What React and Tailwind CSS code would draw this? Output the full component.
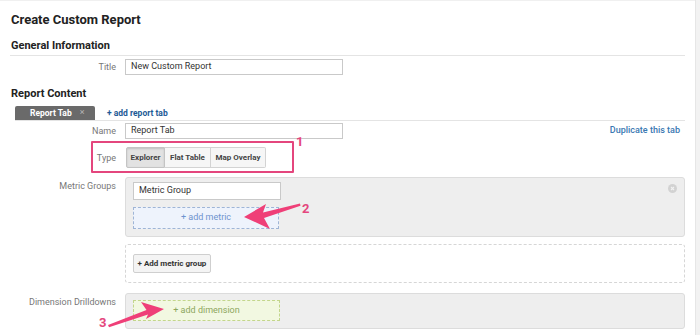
import React from "react";

function Label({ children, className = "" }) {
  return (
    <div className={"w-[107px] shrink-0 text-right text-[9px] leading-[12px] text-[#777] pr-[1px] " + className}>
      {children}
    </div>
  );
}

function Input({ value, className = "" }) {
  return (
    <div className={"h-[16px] bg-white border border-[#c9c9c9] pl-[5px] flex items-center text-[9px] text-[#333] " + className}>
      {value}
    </div>
  );
}

export default function App() {
  return (
    <div className="w-[700px] h-[335px] flex bg-white overflow-hidden relative font-['Roboto','Liberation_Sans',sans-serif]">
      <div className="w-[695px] shrink-0 pl-[10px] pr-[10px] border-t border-[#f0f0f0]">
        <div className="mt-[11px] text-[13px] leading-[16px] font-bold text-[#222] pl-[1px]">Create Custom Report</div>

        <div className="mt-[11px] text-[11px] leading-[14px] font-bold text-[#222] pb-[2px] border-b border-[#e4e4e4] pl-[1px]">
          General Information
        </div>

        <div className="mt-[3px] flex items-center">
          <Label>Title</Label>
          <Input value="New Custom Report" className="ml-[8px] w-[218px]" />
        </div>

        <div className="mt-[12px] text-[11px] leading-[14px] font-bold text-[#222] pl-[1px]">Report Content</div>

        <div className="mt-[5px] ml-[5px] flex items-end border-b border-[#e4e4e4]">
          <div className="w-[80px] h-[14px] bg-[#6a6a6a] rounded-t-[2px] flex items-center pl-[15px] text-[8.5px] font-bold text-white">
            <span>Report Tab</span>
            <span className="ml-[8px] text-[#b5b5b5] font-normal text-[9px]">×</span>
          </div>
          <div className="ml-[12px] self-center text-[8.5px] font-bold text-[#1d5a96]">+ add report tab</div>
        </div>

        <div className="mt-[2px] flex items-center">
          <Label>Name</Label>
          <Input value="Report Tab" className="ml-[8px] w-[218px]" />
          <div className="ml-auto mr-[5px] text-[9px] text-[#3a78b2] font-medium">Duplicate this tab</div>
        </div>

        <div className="mt-[8px] flex items-center">
          <Label>Type</Label>
          <div className="ml-[9px] flex h-[21px] text-[8px] font-bold text-[#444]">
            <div className="w-[39px] flex items-center justify-center bg-[#e2e2e2] border border-[#c4c4c4] rounded-l-[2px] shadow-[inset_0_1px_2px_rgba(0,0,0,0.15)]">Explorer</div>
            <div className="w-[46px] flex items-center justify-center bg-[#f6f6f6] border-y border-r border-[#d3d3d3]">Flat Table</div>
            <div className="w-[55px] flex items-center justify-center bg-[#f6f6f6] border-y border-r border-[#d3d3d3] rounded-r-[2px]">Map Overlay</div>
          </div>
        </div>

        <div className="mt-[9px] flex items-start">
          <Label className="pt-[3px]">Metric Groups</Label>
          <div className="ml-[8px] flex-1 h-[60px] relative bg-[#eeeeee] border border-[#dcdcdc] rounded-[3px] pl-[7px] pt-[4px]">
            <div className="h-[18px] w-[148px] bg-white border border-[#c9c9c9] pl-[5px] flex items-center text-[9px] text-[#333]">Metric Group</div>
            <div className="mt-[7px] h-[22px] w-[146px] bg-[#eef3fc] border border-dashed border-[#9fb5d6] flex items-center justify-center text-[9px] text-[#6f93cf]">
              + add metric
            </div>
            <div className="absolute top-[6px] right-[7px] w-[9px] h-[9px] rounded-full bg-[#d2d2d2] flex items-center justify-center">
              <svg width="5" height="5" viewBox="0 0 5 5"><path d="M1 1L4 4M4 1L1 4" stroke="#f2f2f2" strokeWidth="1.1" /></svg>
            </div>
          </div>
        </div>

        <div className="mt-[7px] ml-[115px] h-[39px] border border-dashed border-[#d6d6d6] rounded-[3px] pl-[7px] pt-[9px]">
          <div className="w-[78px] h-[19px] bg-[#f4f4f4] border border-[#cfcfcf] rounded-[2px] flex items-center justify-center text-[8px] font-bold text-[#333]">
            + Add metric group
          </div>
        </div>

        <div className="mt-[10px] flex items-start">
          <Label className="pt-[3px]">Dimension Drilldowns</Label>
          <div className="ml-[8px] flex-1 h-[36px] bg-[#eeeeee] border border-[#dcdcdc] rounded-[3px] pl-[7px] pt-[6px]">
            <div className="h-[21px] w-[147px] bg-[#f2f8e1] border border-dashed border-[#c3d68c] flex items-center justify-center text-[9px] text-[#8da65d]">
              + add dimension
            </div>
          </div>
        </div>
      </div>
      <div className="flex-1 bg-[#f2f2f2] border-l border-[#e6e6e6]" />

      {/* annotations */}
      <div className="absolute left-[91px] top-[141px] w-[203px] h-[32px] border-2 border-[#e4467d] rounded-[1px]" />
      <div className="absolute left-[296px] top-[135px] text-[13px] leading-[13px] font-bold text-[#e4467d]">1</div>
      <div className="absolute left-[302px] top-[202px] text-[13px] leading-[13px] font-bold text-[#e4467d]">2</div>
      <div className="absolute left-[99px] top-[316px] text-[13px] leading-[13px] font-bold text-[#e4467d]">3</div>
      <svg className="absolute left-0 top-0 pointer-events-none" width="700" height="335" viewBox="0 0 700 335">
        <path d="M244 217 L266 204 L263 212.5 L300 203.5 L300.5 205.8 L264 218 L270 229 Z" fill="#ef3f78" />
        <path d="M164 309 L141 302 L146.5 310 L108 325 L109 327.3 L148 314.5 L146 319 Z" fill="#ef3f78" />
      </svg>
    </div>
  );
}
